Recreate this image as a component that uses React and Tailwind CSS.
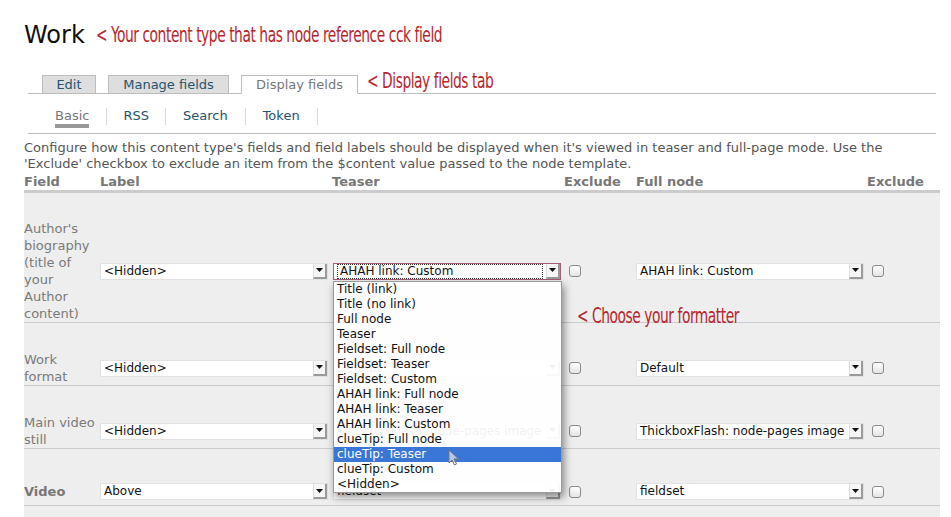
import React from 'react';

const note =
  "inline-block origin-left scale-x-[0.73] whitespace-nowrap font-['Liberation_Sans_Narrow','DejaVu_Sans_Condensed','Liberation_Sans',sans-serif] text-[#b5272d]";

const Arrow = () => (
  <svg width="7" height="4" viewBox="0 0 7 4" className="block">
    <path d="M0 0h7L3.5 4z" fill="#111" />
  </svg>
);

const Select = ({ value, focus, children }) => (
  <div
    className={
      'relative flex h-[17px] w-[228px] items-stretch bg-white text-[12px] leading-[15px] text-[#111] ' +
      (focus ? 'border border-[#a35f78]' : 'border border-[#e2e2e2]')
    }
  >
    <div className="flex flex-1 items-center px-[3px]">
      <span className={focus ? 'flex h-full w-full items-center border border-dotted border-[#333] pl-[2px]' : ''}>
        {value}
      </span>
    </div>
    <div className="flex w-[14px] items-center justify-center border-r-2 border-b-2 border-l border-r-[#9a9a9a] border-b-[#9a9a9a] border-l-[#ddd] bg-[#f6f6f6]">
      <Arrow />
    </div>
    {children}
  </div>
);

const Check = () => (
  <div className="ml-[5px] h-[12px] w-[12px] rounded-[3px] border border-[#8a8a8a] bg-gradient-to-b from-white to-[#e4e4e4]" />
);

const options = [
  'Title (link)',
  'Title (no link)',
  'Full node',
  'Teaser',
  'Fieldset: Full node',
  'Fieldset: Teaser',
  'Fieldset: Custom',
  'AHAH link: Full node',
  'AHAH link: Teaser',
  'AHAH link: Custom',
  'clueTip: Full node',
  'clueTip: Teaser',
  'clueTip: Custom',
  '<Hidden>',
];

const Dropdown = () => (
  <div className="absolute left-[-1px] top-[calc(100%+2px)] z-10 w-[229px] border border-[#9a9a9a] bg-white/[0.94] shadow-[2px_4px_8px_rgba(0,0,0,0.45)]">
    {options.map((o) => (
      <div
        key={o}
        className={
          'relative h-[15px] pl-[3px] text-[12px] leading-[15px] ' +
          (o === 'clueTip: Teaser' ? 'bg-[#3a76d6] text-white' : 'text-[#111]')
        }
      >
        {o}
        {o === 'clueTip: Teaser' && (
          <svg width="12" height="17" viewBox="0 0 12 17" className="absolute left-[114px] top-[2px]">
            <path d="M1 1v13l3-3 2.5 5 2-1-2.5-5h4.5z" fill="#ffffff" fillOpacity="0.6" stroke="#777" strokeWidth="1" />
          </svg>
        )}
      </div>
    ))}
  </div>
);

const rows = [
  {
    field: ["Author's", 'biography', '(title of', 'your', 'Author', 'content)'],
    label: '<Hidden>',
    teaser: 'AHAH link: Custom',
    full: 'AHAH link: Custom',
    h: 'h-[130px]',
    pt: 'pt-[27px]',
    open: true,
  },
  {
    field: ['Work', 'format'],
    label: '<Hidden>',
    teaser: 'Default',
    full: 'Default',
    h: 'h-[63px]',
    pt: 'pt-[28px]',
  },
  {
    field: ['Main video', 'still'],
    label: '<Hidden>',
    teaser: 'ThickboxFlash: node-pages image',
    full: 'ThickboxFlash: node-pages image',
    h: 'h-[63px]',
    pt: 'pt-[28px]',
  },
  {
    field: ['Video'],
    label: 'Above',
    teaser: 'fieldset',
    full: 'fieldset',
    h: 'h-[57px]',
    pt: 'pt-[29px]',
    bold: true,
  },
];

const cols = 'grid grid-cols-[76px_232px_232px_72px_231px_73px]';

export default function App() {
  return (
    <div className="relative h-[517px] w-[951px] overflow-hidden bg-white font-['DejaVu_Sans','Liberation_Sans',sans-serif] text-[13px] text-[#555]">
      <div className="pl-[24px] pt-[19px]">
        {/* Title */}
        <div className="flex h-[32px] items-center">
          <h1 className="text-[24px] leading-[32px] font-normal text-[#111]">Work</h1>
          <span className={note + ' ml-[11px] mt-[2px] text-[21px] tracking-[-0.6px]'}>
            &lt; Your content type that has node reference cck field
          </span>
        </div>

        {/* Tabs */}
        <div className="mt-[24px] ml-[4px] flex h-[19px] w-[908px] items-end border-b border-[#bdbdbd] pl-[14px]">
          <div className="-mb-px flex h-[19px] w-[54px] items-center justify-center border border-[#bdbdbd] bg-[#dedede] text-[#27536b]">
            Edit
          </div>
          <div className="-mb-px ml-[12px] flex h-[19px] w-[121px] items-center justify-center border border-[#bdbdbd] bg-[#dedede] text-[#27536b]">
            Manage fields
          </div>
          <div className="-mb-px ml-[12px] flex h-[19px] w-[117px] items-center justify-center border border-[#bdbdbd] border-b-white bg-white text-[#777]">
            Display fields
          </div>
          <span className={note + ' ml-[9px] mb-[1px] text-[21px] leading-[22px] tracking-[-0.6px]'}>
            &lt; Display fields tab
          </span>
        </div>

        {/* Secondary tabs */}
        <div className="ml-[4px] flex h-[40px] w-[908px] items-center border-b border-[#bdbdbd] pl-[10px] pt-[6px]">
          <div className="flex h-[17px] items-start border-r border-[#ddd] px-[17px]">
            <span className="border-b-[4px] border-[#999] leading-[16px] text-[#777]">Basic</span>
          </div>
          <div className="h-[17px] border-r border-[#ddd] px-[16px] leading-[16px] text-[#27536b]">RSS</div>
          <div className="h-[17px] border-r border-[#ddd] px-[17px] leading-[16px] text-[#27536b]">Search</div>
          <div className="h-[17px] border-r border-[#ddd] px-[17px] leading-[16px] text-[#27536b]">Token</div>
        </div>

        {/* Description */}
        <p className="mt-[6px] w-[916px] leading-[16px] text-[#555]">
          Configure how this content type's fields and field labels should be displayed when it's viewed in teaser and full-page mode. Use the
          <br />
          'Exclude' checkbox to exclude an item from the $content value passed to the node template.
        </p>

        {/* Table */}
        <div className="w-[916px]">
          <div className={cols + ' h-[21px] items-center border-b-[3px] border-[#cccccc] font-bold text-[#777]'}>
            <div>Field</div>
            <div>Label</div>
            <div>Teaser</div>
            <div>Exclude</div>
            <div>Full node</div>
            <div>Exclude</div>
          </div>

          {rows.map((r) => (
            <div key={r.field.join(' ')} className={cols + ' items-center border-b border-[#cccccc] bg-[#eeeeee] ' + r.h + ' ' + r.pt}>
              <div className={'leading-[17px] ' + (r.bold ? 'font-bold text-[#777]' : 'text-[#7a7a7a]')}>
                {r.field.map((l) => (
                  <div key={l}>{l}</div>
                ))}
              </div>
              <div>
                <Select value={r.label} />
              </div>
              <div className="pl-[1px]">
                {r.open ? (
                  <Select value={r.teaser} focus>
                    <Dropdown />
                  </Select>
                ) : (
                  <Select value={r.teaser} />
                )}
              </div>
              <div>
                <Check />
              </div>
              <div>
                <Select value={r.full} />
              </div>
              <div>
                <Check />
              </div>
            </div>
          ))}
          <div className="h-[20px] bg-[#eeeeee]" />
        </div>
      </div>

      {/* Annotation over the table */}
      <span className={note + ' absolute left-[577px] top-[305px] text-[21px] leading-[22px] tracking-[-0.6px]'}>
        &lt; Choose your formatter
      </span>
    </div>
  );
}
